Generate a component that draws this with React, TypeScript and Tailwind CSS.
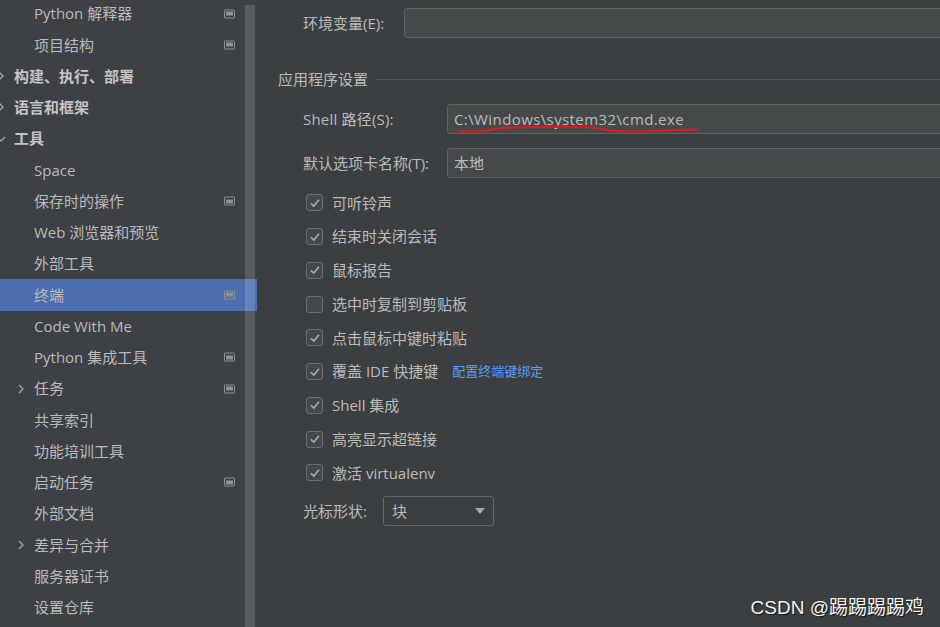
import React from "react";

const FONT = '"Open Sans", "Noto Sans CJK SC", sans-serif';

function PageIcon() {
  return (
    <div className="w-[11px] h-[9px] border border-[#8e9195] rounded-[1px] flex items-center justify-center">
      <div className="w-[7px] h-[4px] bg-[#8e9195]" />
    </div>
  );
}

function Chevron({ down = false }: { down?: boolean }) {
  return (
    <svg width="10" height="10" viewBox="0 0 10 10" className="shrink-0">
      {down ? (
        <path d="M1 3 L5 7 L9 3" stroke="#a0a3a7" strokeWidth="1.4" fill="none" />
      ) : (
        <path d="M3 1 L7 5 L3 9" stroke="#a0a3a7" strokeWidth="1.4" fill="none" />
      )}
    </svg>
  );
}

type Item = {
  label: string;
  level: 0 | 1;
  icon?: boolean;
  chevron?: "right" | "down";
  bold?: boolean;
  selected?: boolean;
};

const items: Item[] = [
  { label: "Python 解释器", level: 1, icon: true },
  { label: "项目结构", level: 1, icon: true },
  { label: "构建、执行、部署", level: 0, chevron: "right", bold: true },
  { label: "语言和框架", level: 0, chevron: "right", bold: true },
  { label: "工具", level: 0, chevron: "down", bold: true },
  { label: "Space", level: 1 },
  { label: "保存时的操作", level: 1, icon: true },
  { label: "Web 浏览器和预览", level: 1 },
  { label: "外部工具", level: 1 },
  { label: "终端", level: 1, icon: true, selected: true },
  { label: "Code With Me", level: 1 },
  { label: "Python 集成工具", level: 1, icon: true },
  { label: "任务", level: 1, icon: true, chevron: "right" },
  { label: "共享索引", level: 1 },
  { label: "功能培训工具", level: 1 },
  { label: "启动任务", level: 1, icon: true },
  { label: "外部文档", level: 1 },
  { label: "差异与合并", level: 1, chevron: "right" },
  { label: "服务器证书", level: 1 },
  { label: "设置仓库", level: 1 },
];

function Sidebar() {
  return (
    <div className="relative w-[257px] shrink-0 h-full bg-[#3d4045] overflow-hidden">
      <div className="mt-[-2px] flex flex-col">
        {items.map((it, i) => (
          <div
            key={i}
            className={`relative h-[31.25px] flex items-center text-[15px] ${
              it.selected ? "bg-[#4b6eaf]" : ""
            } ${it.bold ? "font-semibold text-[#c4c4c4]" : "text-[#bbbbbb]"}`}
          >
            {it.chevron && (
              <div
                className={`absolute top-1/2 -translate-y-1/2 ${
                  it.level === 0 ? "left-[-4px]" : "left-[16px]"
                }`}
              >
                <Chevron down={it.chevron === "down"} />
              </div>
            )}
            <span className={it.level === 0 ? "pl-[14px]" : "pl-[34px]"}>{it.label}</span>
            {it.icon && (
              <div className="absolute left-[224px] top-1/2 -translate-y-1/2">
                <PageIcon />
              </div>
            )}
          </div>
        ))}
      </div>
      <div className="absolute left-[245px] top-[5px] bottom-0 w-[10px] bg-white/15" />
    </div>
  );
}

function TextInput({ children }: { children?: React.ReactNode }) {
  return (
    <div className="relative flex-1 h-[30px] -mr-[20px] bg-[#45494a] border border-[#5e6162] rounded-[3px] flex items-center pl-[6px] text-[15px] text-[#bbbbbb]">
      {children}
    </div>
  );
}

function Check({ checked = true }: { checked?: boolean }) {
  return (
    <div className="w-[17px] h-[17px] rounded-[3px] border border-[#6b6e70] bg-[#43494a] flex items-center justify-center shrink-0">
      {checked && (
        <svg width="12" height="12" viewBox="0 0 12 12">
          <path d="M2 6.3 L4.8 9 L10 2.8" stroke="#a9abad" strokeWidth="1.6" fill="none" />
        </svg>
      )}
    </div>
  );
}

const checks: { label: string; checked: boolean; link?: string }[] = [
  { label: "可听铃声", checked: true },
  { label: "结束时关闭会话", checked: true },
  { label: "鼠标报告", checked: true },
  { label: "选中时复制到剪贴板", checked: false },
  { label: "点击鼠标中键时粘贴", checked: true },
  { label: "覆盖 IDE 快捷键", checked: true, link: "配置终端键绑定" },
  { label: "Shell 集成", checked: true },
  { label: "高亮显示超链接", checked: true },
  { label: "激活 virtualenv", checked: true },
];

function Main() {
  return (
    <div className="relative flex-1 h-full bg-[#3c3f41] overflow-hidden text-[#bbbbbb] text-[15px]">
      <div className="flex flex-col pl-[21px]">
        <div className="mt-[8px] flex items-center h-[30px] pl-[25px]">
          <span className="w-[101px] shrink-0">环境变量(E):</span>
          <TextInput />
        </div>

        <div className="mt-[28px] flex items-center h-[26px]">
          <span className="shrink-0">应用程序设置</span>
          <div className="flex-1 h-px bg-[#525557] ml-[8px]" />
        </div>

        <div className="mt-[12px] flex items-center h-[30px] pl-[25px]">
          <span className="w-[144px] shrink-0 tracking-[0.2px]">Shell 路径(S):</span>
          <TextInput>
            <span className="tracking-[0.4px]">C:\Windows\system32\cmd.exe</span>
            <svg
              className="absolute left-[4px] top-[19px]"
              width="250"
              height="10"
              viewBox="0 0 250 10"
            >
              <path
                d="M7 7.5 C 15 7.5, 25 7.5, 32 7 C 38 6.5, 42 4.5, 49 4 C 70 2.8, 110 2.6, 132 2.8 C 142 3, 148 5, 160 6.5 C 175 7.8, 195 7.5, 212 6.5 C 225 5.8, 235 5.5, 245 5.5"
                stroke="#e8161b"
                strokeWidth="2"
                fill="none"
                strokeLinecap="round"
              />
            </svg>
          </TextInput>
        </div>

        <div className="mt-[14px] flex items-center h-[30px] pl-[25px]">
          <span className="w-[144px] shrink-0">默认选项卡名称(T):</span>
          <TextInput>本地</TextInput>
        </div>

        <div className="mt-[8px] flex flex-col pl-[28px]">
          {checks.map((c, i) => (
            <div key={i} className="h-[33.75px] flex items-center">
              <Check checked={c.checked} />
              <span className="ml-[9px]">{c.label}</span>
              {c.link && (
                <span className="ml-[14px] text-[13px] text-[#589df6]">{c.link}</span>
              )}
            </div>
          ))}
        </div>

        <div className="mt-[6px] flex items-center h-[30px] pl-[25px]">
          <span className="w-[80px] shrink-0">光标形状:</span>
          <div className="w-[111px] h-[30px] border border-[#646769] rounded-[3px] flex items-center justify-between pl-[8px] pr-[8px]">
            <span>块</span>
            <svg width="10" height="6" viewBox="0 0 10 6">
              <path d="M0 0 L10 0 L5 6 Z" fill="#a5a7a9" />
            </svg>
          </div>
        </div>
      </div>

      <div
        className="absolute right-[16px] bottom-[5px] text-[19px] text-[#f2f2f2]"
        style={{ fontFamily: '"Liberation Sans", "Noto Sans CJK SC", sans-serif', textShadow: "1px 1px 1px rgba(0,0,0,0.7)" }}
      >
        CSDN @踢踢踢踢鸡
      </div>
    </div>
  );
}

export default function App() {
  return (
    <div className="w-[940px] h-[627px] flex overflow-hidden" style={{ fontFamily: FONT }}>
      <Sidebar />
      <Main />
    </div>
  );
}
